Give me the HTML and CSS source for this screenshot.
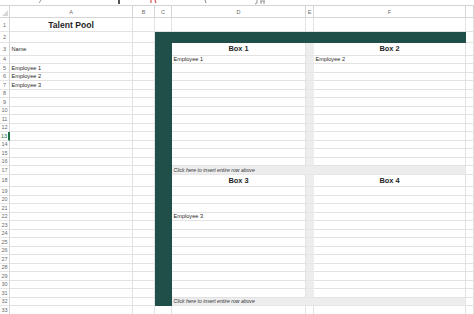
FILE: index.html
```html
<!DOCTYPE html>
<html lang="en">
<head>
  <meta charset="UTF-8" />
  <title>Talent Pool</title>
  <link rel="stylesheet" href="styles.css">
</head>
<body>
  <div class="toolbar">
    <svg width="474" height="5" viewBox="0 0 474 5">
      <path d="M41 0 L39 3" stroke="#9a9a9a" stroke-width="1" fill="none"/>
      <rect x="118" y="0" width="2" height="4" fill="#555"/>
      <path d="M151 0 L151 3 M155 0 L156 3" stroke="#d9534f" stroke-width="1.2" fill="none"/>
      <path d="M205 0 L206 3" stroke="#888" stroke-width="1" fill="none"/>
      <path d="M257 0 L257 3 L255 4 M260 1 L265 1 M261 1 L261 4 M264 1 L264 4" stroke="#777" stroke-width="0.8" fill="none"/>
    </svg>
  </div>

  <div class="sheet">
    <div class="row hd">
      <div class="corner"></div>
      <div class="ch">A</div><div class="ch">B</div><div class="ch">C</div><div class="ch">D</div>
      <div class="ch">E</div><div class="ch">F</div><div class="ch"></div>
    </div>

    <div class="row h1">
      <div class="rh">1</div>
      <div class="c title">Talent Pool</div><div class="c"></div><div class="c"></div><div class="c"></div>
      <div class="c"></div><div class="c"></div><div class="c"></div>
    </div>

    <div class="row h2">
      <div class="rh">2</div>
      <div class="c"></div><div class="c"></div><div class="c g band"></div><div class="c"></div>
    </div>

    <div class="row h3">
      <div class="rh">3</div>
      <div class="c">Name</div><div class="c"></div><div class="c g"></div>
      <div class="c box">Box 1</div><div class="c e"></div><div class="c box">Box 2</div><div class="c"></div>
    </div>

    <div class="row">
      <div class="rh">4</div>
      <div class="c"></div><div class="c"></div><div class="c g"></div>
      <div class="c">Employee 1</div><div class="c e"></div><div class="c">Employee 2</div><div class="c"></div>
    </div>
    <div class="row">
      <div class="rh">5</div>
      <div class="c">Employee 1</div><div class="c"></div><div class="c g"></div>
      <div class="c"></div><div class="c e"></div><div class="c"></div><div class="c"></div>
    </div>
    <div class="row">
      <div class="rh">6</div>
      <div class="c">Employee 2</div><div class="c"></div><div class="c g"></div>
      <div class="c"></div><div class="c e"></div><div class="c"></div><div class="c"></div>
    </div>
    <div class="row">
      <div class="rh">7</div>
      <div class="c">Employee 3</div><div class="c"></div><div class="c g"></div>
      <div class="c"></div><div class="c e"></div><div class="c"></div><div class="c"></div>
    </div>
    <div class="row">
      <div class="rh">8</div>
      <div class="c"></div><div class="c"></div><div class="c g"></div>
      <div class="c"></div><div class="c e"></div><div class="c"></div><div class="c"></div>
    </div>
    <div class="row">
      <div class="rh">9</div>
      <div class="c"></div><div class="c"></div><div class="c g"></div>
      <div class="c"></div><div class="c e"></div><div class="c"></div><div class="c"></div>
    </div>
    <div class="row">
      <div class="rh">10</div>
      <div class="c"></div><div class="c"></div><div class="c g"></div>
      <div class="c"></div><div class="c e"></div><div class="c"></div><div class="c"></div>
    </div>
    <div class="row">
      <div class="rh">11</div>
      <div class="c"></div><div class="c"></div><div class="c g"></div>
      <div class="c"></div><div class="c e"></div><div class="c"></div><div class="c"></div>
    </div>
    <div class="row">
      <div class="rh">12</div>
      <div class="c"></div><div class="c"></div><div class="c g"></div>
      <div class="c"></div><div class="c e"></div><div class="c"></div><div class="c"></div>
    </div>
    <div class="row">
      <div class="rh active">13</div>
      <div class="c"></div><div class="c"></div><div class="c g"></div>
      <div class="c"></div><div class="c e"></div><div class="c"></div><div class="c"></div>
    </div>
    <div class="row">
      <div class="rh">14</div>
      <div class="c"></div><div class="c"></div><div class="c g"></div>
      <div class="c"></div><div class="c e"></div><div class="c"></div><div class="c"></div>
    </div>
    <div class="row">
      <div class="rh">15</div>
      <div class="c"></div><div class="c"></div><div class="c g"></div>
      <div class="c"></div><div class="c e"></div><div class="c"></div><div class="c"></div>
    </div>
    <div class="row">
      <div class="rh">16</div>
      <div class="c"></div><div class="c"></div><div class="c g"></div>
      <div class="c"></div><div class="c e"></div><div class="c"></div><div class="c"></div>
    </div>
    <div class="row">
      <div class="rh">17</div>
      <div class="c"></div><div class="c"></div><div class="c g"></div>
      <div class="c insert">Click here to insert entire row above</div><div class="c"></div>
    </div>

    <div class="row h3">
      <div class="rh">18</div>
      <div class="c"></div><div class="c"></div><div class="c g"></div>
      <div class="c box">Box 3</div><div class="c e"></div><div class="c box">Box 4</div><div class="c"></div>
    </div>
    <div class="row">
      <div class="rh">19</div>
      <div class="c"></div><div class="c"></div><div class="c g"></div>
      <div class="c"></div><div class="c e"></div><div class="c"></div><div class="c"></div>
    </div>
    <div class="row">
      <div class="rh">20</div>
      <div class="c"></div><div class="c"></div><div class="c g"></div>
      <div class="c"></div><div class="c e"></div><div class="c"></div><div class="c"></div>
    </div>
    <div class="row">
      <div class="rh">21</div>
      <div class="c"></div><div class="c"></div><div class="c g"></div>
      <div class="c"></div><div class="c e"></div><div class="c"></div><div class="c"></div>
    </div>
    <div class="row">
      <div class="rh">22</div>
      <div class="c"></div><div class="c"></div><div class="c g"></div>
      <div class="c">Employee 3</div><div class="c e"></div><div class="c"></div><div class="c"></div>
    </div>
    <div class="row">
      <div class="rh">23</div>
      <div class="c"></div><div class="c"></div><div class="c g"></div>
      <div class="c"></div><div class="c e"></div><div class="c"></div><div class="c"></div>
    </div>
    <div class="row">
      <div class="rh">24</div>
      <div class="c"></div><div class="c"></div><div class="c g"></div>
      <div class="c"></div><div class="c e"></div><div class="c"></div><div class="c"></div>
    </div>
    <div class="row">
      <div class="rh">25</div>
      <div class="c"></div><div class="c"></div><div class="c g"></div>
      <div class="c"></div><div class="c e"></div><div class="c"></div><div class="c"></div>
    </div>
    <div class="row">
      <div class="rh">26</div>
      <div class="c"></div><div class="c"></div><div class="c g"></div>
      <div class="c"></div><div class="c e"></div><div class="c"></div><div class="c"></div>
    </div>
    <div class="row">
      <div class="rh">27</div>
      <div class="c"></div><div class="c"></div><div class="c g"></div>
      <div class="c"></div><div class="c e"></div><div class="c"></div><div class="c"></div>
    </div>
    <div class="row">
      <div class="rh">28</div>
      <div class="c"></div><div class="c"></div><div class="c g"></div>
      <div class="c"></div><div class="c e"></div><div class="c"></div><div class="c"></div>
    </div>
    <div class="row">
      <div class="rh">29</div>
      <div class="c"></div><div class="c"></div><div class="c g"></div>
      <div class="c"></div><div class="c e"></div><div class="c"></div><div class="c"></div>
    </div>
    <div class="row">
      <div class="rh">30</div>
      <div class="c"></div><div class="c"></div><div class="c g"></div>
      <div class="c"></div><div class="c e"></div><div class="c"></div><div class="c"></div>
    </div>
    <div class="row">
      <div class="rh">31</div>
      <div class="c"></div><div class="c"></div><div class="c g"></div>
      <div class="c"></div><div class="c e"></div><div class="c"></div><div class="c"></div>
    </div>
    <div class="row">
      <div class="rh">32</div>
      <div class="c"></div><div class="c"></div><div class="c g"></div>
      <div class="c insert">Click here to insert entire row above</div><div class="c"></div>
    </div>
    <div class="row">
      <div class="rh">33</div>
      <div class="c"></div><div class="c"></div><div class="c"></div><div class="c"></div>
      <div class="c"></div><div class="c"></div><div class="c"></div>
    </div>
  </div>
</body>
</html>
```

FILE: styles.css
```css
* {
  box-sizing: border-box;
}
html, body {
  margin: 0;
  padding: 0;
  height: 100%;
}
body {
  background: #fff;
  font-family: "Liberation Sans", Arial, sans-serif;
  color: #1f1f1f;
  overflow: hidden;
}

.toolbar {
  height: 6px;
  border-bottom: 1px solid #d4d4d4;
}
.toolbar svg {
  display: block;
}

.row {
  display: grid;
  grid-template-columns: 10px 123px 22px 17px 134px 8px 152px 8px;
  height: 8.5px;
}
.row.hd { height: 12px; }
.row.h1 { height: 14px; }
.row.h2 { height: 11px; }
.row.h3 { height: 12.5px; }

.corner, .ch, .rh {
  color: #6b6b6b;
  font-size: 5.5px;
  display: flex;
  align-items: center;
  justify-content: center;
  border-right: 1px solid #d6d6d6;
  border-bottom: 1px solid #d6d6d6;
}
.corner {
  position: relative;
}
.corner::after {
  content: "";
  position: absolute;
  right: 1px;
  bottom: 1px;
  border-left: 6px solid transparent;
  border-bottom: 6px solid #d8d8d8;
}
.rh {
  border-bottom-color: #e6e6e6;
}
.rh.active {
  color: #1e7145;
  border-right: 2px solid #1e7145;
}

.c {
  border-right: 1px solid #e2e2e2;
  border-bottom: 1px solid #e2e2e2;
  font-size: 5.6px;
  display: flex;
  align-items: center;
  padding-left: 1.5px;
  white-space: nowrap;
  overflow: visible;
}

.title {
  justify-content: center;
  font-weight: bold;
  font-size: 8.6px;
  padding-left: 0;
}
.box {
  justify-content: center;
  font-weight: bold;
  font-size: 7.4px;
  padding-left: 0;
}

.g {
  background: #1f4f48;
  border-color: #1f4f48;
}
.band {
  grid-column: 4 / 8;
}
.e {
  background: #ededed;
  border-right-color: #ededed;
  border-bottom-color: #e6e6e6;
}
.insert {
  grid-column: 5 / 8;
  background: #ededed;
  border-color: #e6e6e6;
  font-style: italic;
  font-size: 5.1px;
  color: #333;
}
```
